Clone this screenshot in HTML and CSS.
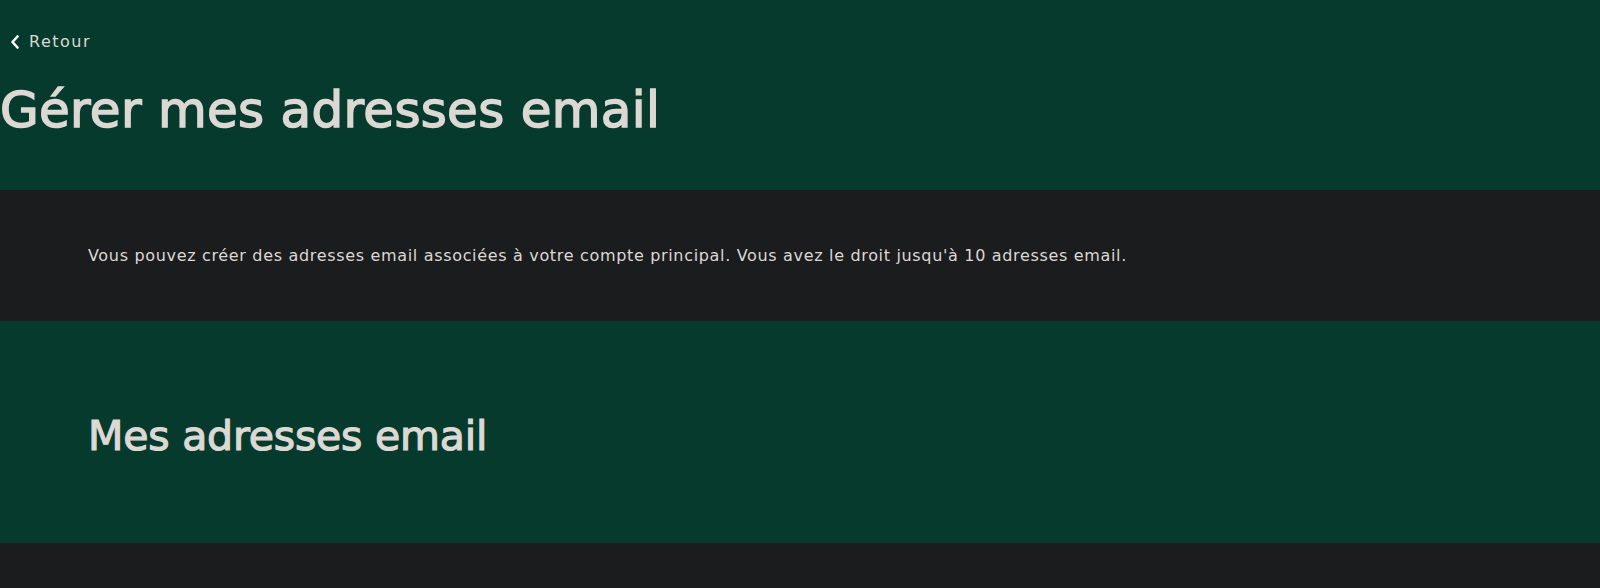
FILE: index.html
```html
<!DOCTYPE html>
<html lang="fr">
<head>
<meta charset="utf-8">
<title>Gérer mes adresses email</title>
<link rel="stylesheet" href="styles.css">
</head>
<body>
<header class="hero">
  <a class="back" href="#">
    <svg class="back-icon" viewBox="0 0 10 14" width="10" height="14" aria-hidden="true">
      <path d="M7.5 1.5 L2.5 7 L7.5 12.5" fill="none" stroke="#ffffff" stroke-width="2.6" stroke-linecap="round" stroke-linejoin="round"/>
    </svg>
    <span>Retour</span>
  </a>
  <h1 class="title">Gérer mes adresses email</h1>
</header>
<section class="intro">
  <p>Vous pouvez créer des adresses email associées à votre compte principal. Vous avez le droit jusqu'à 10 adresses email.</p>
</section>
<section class="list">
  <h2 class="list-title">Mes adresses email</h2>
</section>
<section class="rest"></section>
</body>
</html>
```
FILE: styles.css
```css
html, body {
  margin: 0;
  padding: 0;
  background: #1b1c1e;
  font-family: "DejaVu Sans", "Noto Sans", sans-serif;
  color: #dcd8d4;
}
.hero {
  background: #063a2d;
  height: 190px;
  box-sizing: border-box;
  padding-top: 30px;
}
.back {
  display: flex;
  align-items: center;
  gap: 9px;
  padding-left: 10px;
  color: #dcd8d4;
  text-decoration: none;
  font-size: 16px;
  line-height: 24px;
  letter-spacing: 1.5px;
}
.back-icon {
  display: block;
}
.title {
  margin: 26px 0 0 0;
  font-size: 50px;
  font-weight: 400;
  line-height: 60px;
  letter-spacing: 0.3px;
  -webkit-text-stroke: 1.5px #dcd8d4;
}
.intro {
  height: 131px;
  display: flex;
  align-items: center;
  padding: 0 88px;
}
.intro p {
  margin: 0;
  font-size: 16px;
  line-height: 24px;
  letter-spacing: 0.67px;
}
.list {
  background: #063a2d;
  height: 222px;
  box-sizing: border-box;
  padding: 89px 88px 0;
}
.list-title {
  margin: 0;
  font-size: 41px;
  font-weight: 400;
  line-height: 52px;
  letter-spacing: -0.2px;
  -webkit-text-stroke: 1.2px #dcd8d4;
}
.rest {
  height: 45px;
}
```
